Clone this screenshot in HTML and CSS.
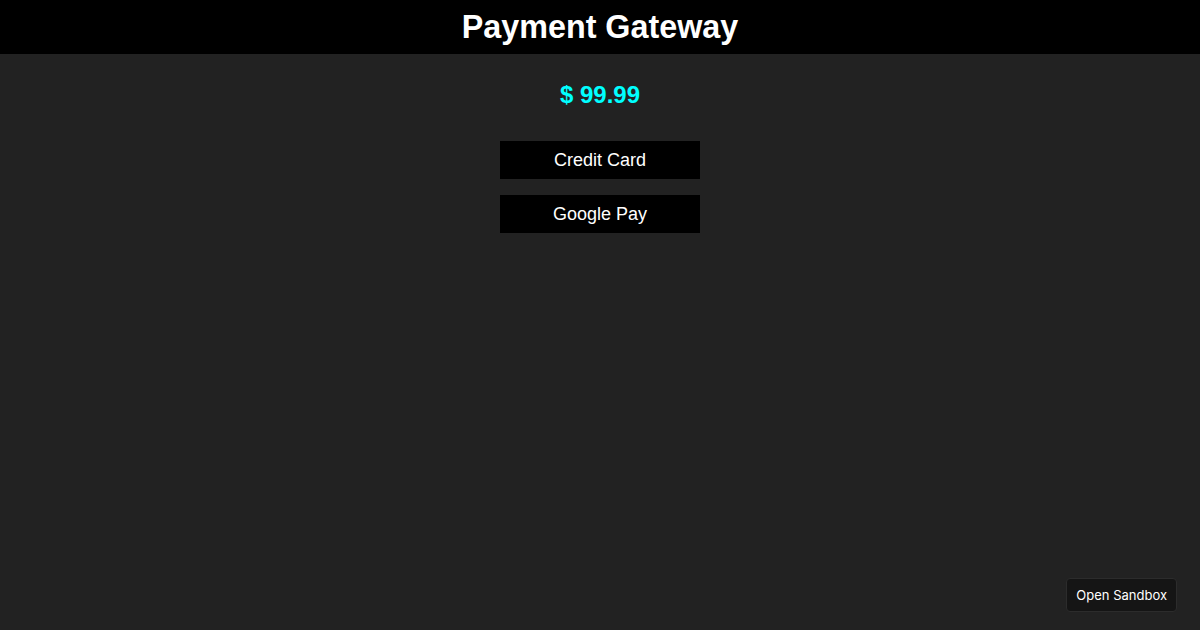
FILE: index.html
```html
<!DOCTYPE html>
<html lang="en">
<head>
  <meta charset="UTF-8" />
  <meta name="viewport" content="width=device-width, initial-scale=1.0"/>
  <title>Payment Gateway</title>
  <link rel="stylesheet" href="styles.css">
</head>
<body>
  <!-- Header -->
  <header class="top-bar">
    <h1>Payment Gateway</h1>
  </header>

  <!-- Amount + methods -->
  <main class="checkout">
    <h2 class="amount">$ 99.99</h2>
    <div class="methods">
      <button class="method">Credit Card</button>
      <button class="method">Google Pay</button>
    </div>
  </main>

  <button class="sandbox-btn">Open Sandbox</button>
</body>
</html>
```

FILE: styles.css
```css
* {
  box-sizing: border-box;
}

body {
  margin: 0;
  background: #222;
  color: white;
  font-family: "Liberation Sans", Arial, sans-serif;
  min-height: 630px;
}

.top-bar {
  background: #000;
  text-align: center;
  padding: 8px 0;
}

.top-bar h1 {
  margin: 0;
  font-size: 32.3px;
  line-height: 38px;
}

.checkout {
  display: flex;
  flex-direction: column;
  align-items: center;
}

.amount {
  margin: 27px 0 32px;
  font-size: 24px;
  line-height: 28px;
  color: #0ff;
}

.methods {
  display: flex;
  flex-direction: column;
  gap: 16px;
}

.method {
  width: 200px;
  height: 38px;
  background: #000;
  color: white;
  border: none;
  font-family: "Liberation Sans", Arial, sans-serif;
  font-size: 18px;
  cursor: pointer;
}

.sandbox-btn {
  position: fixed;
  right: 23px;
  bottom: 18px;
  padding: 0 9px;
  height: 34px;
  background: #151515;
  color: #fff;
  border: 1px solid #2c2c2c;
  border-radius: 4px;
  font-family: Inter, "Noto Sans", sans-serif;
  font-size: 13px;
}
```
